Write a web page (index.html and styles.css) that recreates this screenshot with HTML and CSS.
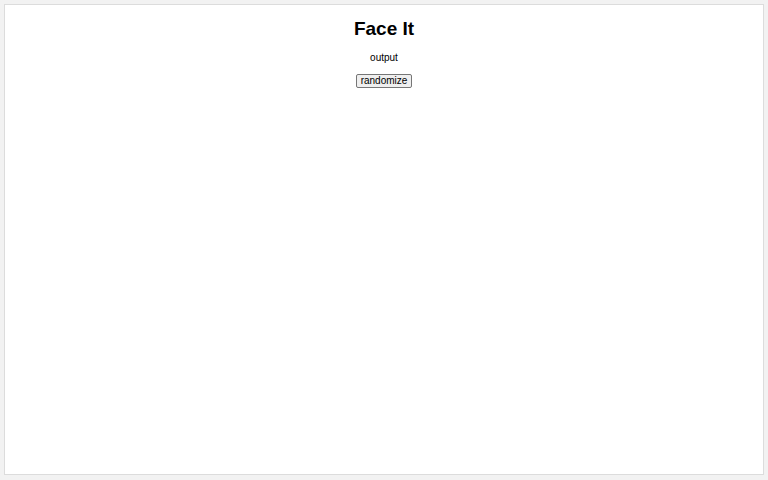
FILE: index.html
```html
<!DOCTYPE html>
<html>
<head>
<meta charset="utf-8">
<link rel="stylesheet" href="styles.css">
</head>
<body>
<div class="frame">
  <h1 class="title">Face It</h1>
  <div class="output">output</div>
  <button class="btn">randomize</button>
</div>
</body>
</html>
```
FILE: styles.css
```css
html, body { margin: 0; padding: 0; }
body {
  background: #f2f2f2;
  padding: 4px 4px 5px 4px;
  height: 480px;
  box-sizing: border-box;
  font-family: "Liberation Sans", Arial, sans-serif;
}
.frame {
  background: #fff;
  border: 1px solid #dcdcdc;
  height: 100%;
  box-sizing: border-box;
  display: flex;
  flex-direction: column;
  align-items: center;
}
.title {
  margin: 13px 0 0 0;
  font-size: 19px;
  line-height: 22px;
  font-weight: bold;
  color: #000;
}
.output {
  margin-top: 12px;
  font-size: 10px;
  line-height: 12px;
  color: #000;
}
.btn {
  margin-top: 10px;
  font-family: "Liberation Sans", Arial, sans-serif;
  font-size: 10px;
  line-height: 12px;
  padding: 0 4px;
  background: #efefef;
  border: 1px solid #767676;
  border-radius: 2px;
  color: #000;
}
```
